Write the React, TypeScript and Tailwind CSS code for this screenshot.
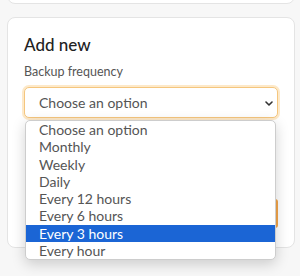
import React from 'react';

const options = [
  'Choose an option',
  'Monthly',
  'Weekly',
  'Daily',
  'Every 12 hours',
  'Every 6 hours',
  'Every 3 hours',
  'Every hour',
];

export default function App() {
  const selected = 'Every 3 hours';

  return (
    <div className="relative h-[276px] overflow-hidden bg-[#f7f7f7] font-['Lato',sans-serif]">
      {/* previous card, mostly scrolled out */}
      <div className="-mt-[16px] ml-[7px] h-[20px] w-[288px] rounded-lg border border-[#e4e4e4] bg-white" />

      {/* Add new card */}
      <div className="mt-[13px] ml-[7px] w-[288px] rounded-lg border border-[#e4e4e4] bg-white px-4 pt-[15px] pb-[19px]">
        <h2 className="text-[17px] leading-[24px] font-medium text-[#222]">Add new</h2>
        <p className="mt-[7px] text-[12.5px] leading-[16px] text-[#555]">Backup frequency</p>

        <div className="relative mt-[7px]">
          <div className="flex h-[31px] items-center rounded-[5px] border border-[#f5c67e] bg-white pl-[14px] shadow-[0_0_0_2px_#fde9c9] text-[14px] text-[#555]">
            Choose an option
          </div>
          <svg className="absolute right-[5px] top-[14px]" width="8" height="5" viewBox="0 0 8 5">
            <path d="M1 1l3 3 3-3" fill="none" stroke="#333" strokeWidth="1.6" strokeLinecap="round" strokeLinejoin="round" />
          </svg>

          {/* open listbox */}
          <ul className="absolute left-[1px] top-[33px] z-10 w-[251px] overflow-hidden rounded-[5px] border border-[#cdcdcd] bg-white shadow-[0_4px_14px_rgba(0,0,0,0.18)]">
            {options.map(o => (
              <li
                key={o}
                className={`h-[17.25px] pl-[13px] text-[14px] leading-[17.25px] ${o === selected ? 'bg-[#1b65d5] text-white' : 'text-[#555]'}`}
              >
                {o}
              </li>
            ))}
          </ul>
        </div>

        <div className="mt-[81px] flex justify-end">
          <button className="h-[29px] w-[248px] rounded-[3px] bg-[#f2a54a] text-[14px] text-white">Save</button>
        </div>
      </div>
    </div>
  );
}
